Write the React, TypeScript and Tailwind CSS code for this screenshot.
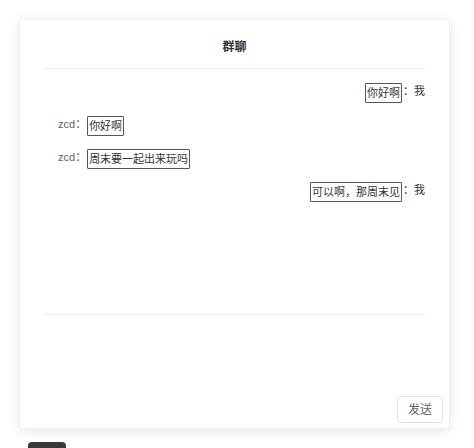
import React from 'react';

type Message = { from: string; text: string; mine: boolean };

const messages: Message[] = [
  { from: '我', text: '你好啊', mine: true },
  { from: 'zcd', text: '你好啊', mine: false },
  { from: 'zcd', text: '周末要一起出来玩吗', mine: false },
  { from: '我', text: '可以啊，那周末见', mine: true },
];

function Bubble({ text }: { text: string }) {
  return (
    <span className="border border-[#555] rounded-[1px] px-[1px] text-[11px] leading-[18px] text-[#333]">
      {text}
    </span>
  );
}

export default function App() {
  return (
    <div
      className="min-h-screen bg-white text-[12px]"
      style={{ fontFamily: '"Liberation Sans", "Noto Sans CJK SC", sans-serif' }}
    >
      <div className="pt-[19px] pl-[19px]">
        {/* chat card */}
        <div className="w-[431px] h-[410px] bg-white rounded-[4px] border border-[#eef0f4] shadow-[0_2px_12px_0_rgba(0,0,0,0.1)] flex flex-col">
          <div className="mx-[24px] h-[49px] pt-[6px] border-b border-[#ebeef5] flex items-center justify-center">
            <h2 className="font-bold text-[12px] text-[#303133]">群聊</h2>
          </div>

          {/* message list */}
          <div className="mx-[24px] h-[246px] border-b border-[#ebeef5] pt-[14px] flex flex-col gap-[13px]">
            {messages.map((m, i) =>
              m.mine ? (
                <div key={i} className="flex items-start justify-end">
                  <Bubble text={m.text} />
                  <span className="text-[#333] text-[11px] ml-[1px] leading-[16px]">：{m.from}</span>
                </div>
              ) : (
                <div key={i} className="flex items-start pl-[14px]">
                  <span className="text-[#606266] text-[11px] mr-[1px] leading-[16px]">{m.from}：</span>
                  <Bubble text={m.text} />
                </div>
              )
            )}
          </div>

          {/* input area */}
          <div className="flex-1 flex flex-col justify-end items-end pr-[6px] pb-[5px]">
            <button className="w-[46px] h-[27px] bg-white border border-[#dcdfe6] rounded-[4px] text-[12px] text-[#606266]">
              发送
            </button>
          </div>
        </div>

        <button className="mt-[13px] ml-[9px] h-[28px] px-[7px] rounded-[4px] bg-[#3a3a3a] text-white text-[12px]">
          返回
        </button>
      </div>
    </div>
  );
}
